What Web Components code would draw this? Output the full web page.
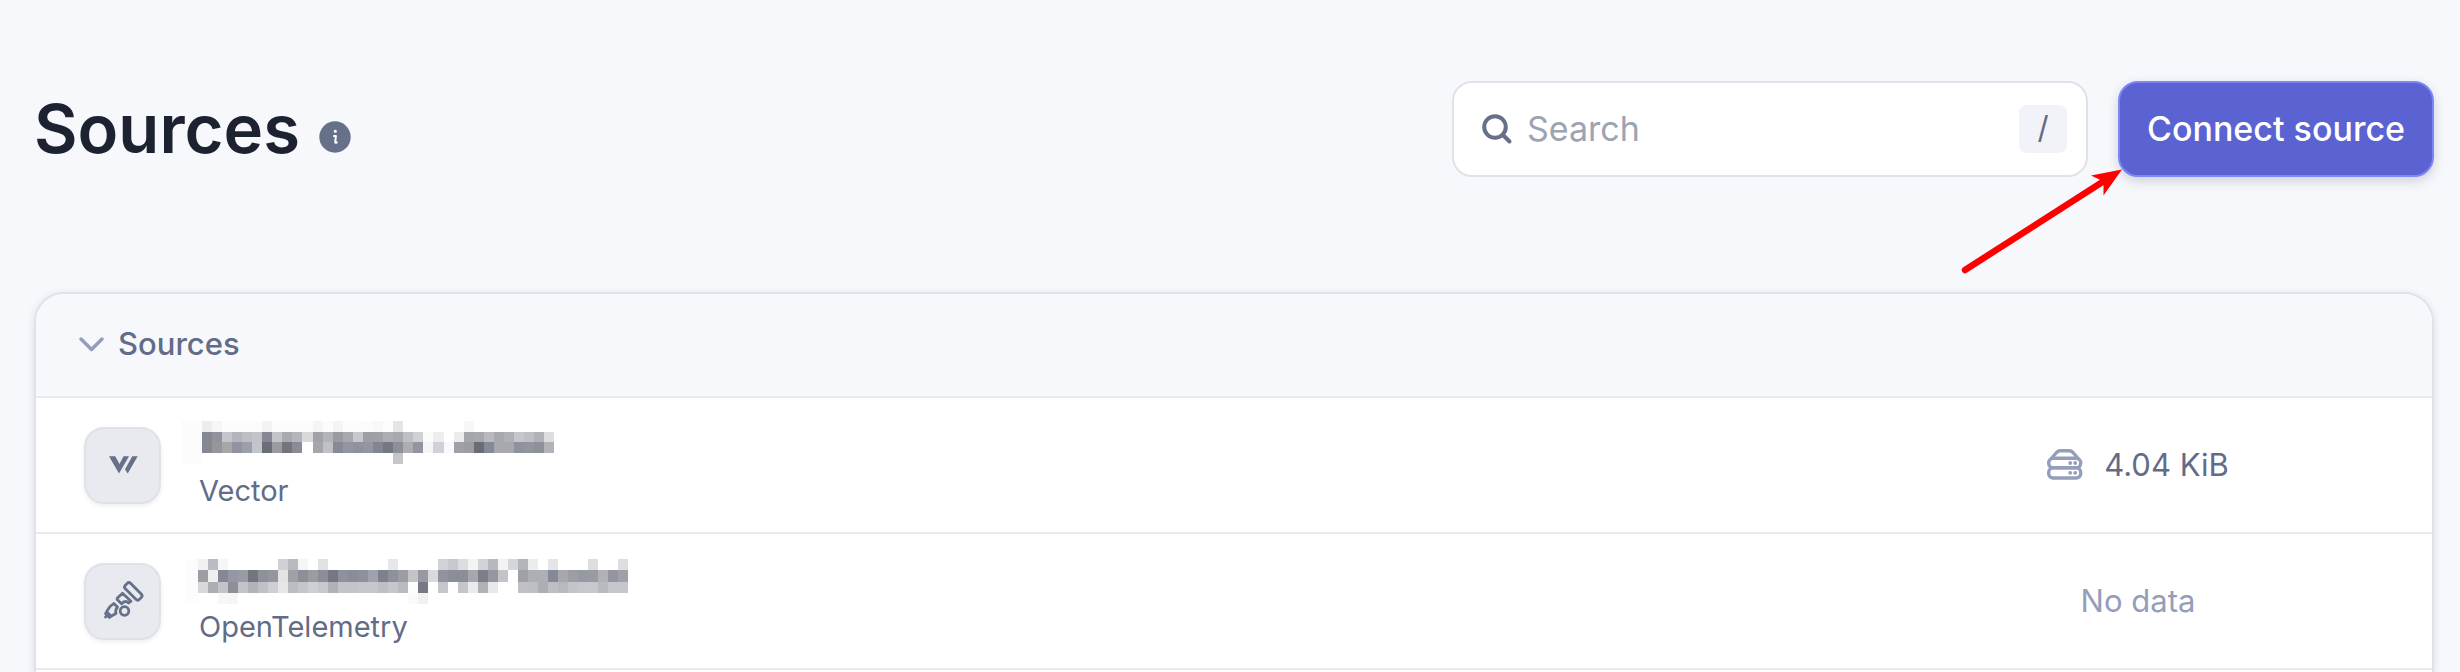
<!DOCTYPE html>
<html lang="en">
<head>
<meta charset="utf-8">
<title>Sources</title>
<style>
body { margin: 0; background: #f7f8fc; color: #626c87; font-family: Inter, "Liberation Sans", sans-serif; }
</style>
</head>
<body>
<sources-page></sources-page>

<template id="t-page">
<style>
:host { display: flex; flex-direction: column; box-sizing: border-box; min-height: 100vh; padding: 81px 26px 0 34px; }
header { display: flex; align-items: center; gap: 30px; height: 96px; margin-bottom: 115px; }
page-title, source-panel { flex: 1; }
.action { position: relative; display: flex; }
.arrow { position: absolute; left: -158px; top: 86px; pointer-events: none; }
</style>
<header>
  <page-title>Sources</page-title>
  <search-field></search-field>
  <div class="action">
    <primary-button>Connect source</primary-button>
    <svg class="arrow" width="166" height="110" viewBox="0 0 166 110" aria-hidden="true">
      <path d="M5 103 144 14" stroke="#f00" stroke-width="6.5" stroke-linecap="round"/>
      <path d="M162 2.500 131 8.500 140.500 13 143.500 17.500V28.500Z" fill="#f00"/>
    </svg>
  </div>
</header>
<source-panel heading="Sources">
  <source-row kind="Vector" icon="vector" name-mask="a"><storage-size>4.04 KiB</storage-size></source-row>
  <source-row kind="OpenTelemetry" icon="otel" name-mask="b"><no-data>No data</no-data></source-row>
</source-panel>
</template>

<template id="t-title">
<style>
:host { display: flex; align-items: center; gap: 19px; }
h1 { margin: 0; font-size: 67px; line-height: 80px; font-weight: 600; color: #1c2230; }
svg { margin-top: 16px; }
</style>
<h1><slot></slot></h1>
<svg width="32" height="32" viewBox="0 0 32 32" role="img" aria-label="Information">
  <circle cx="16" cy="16" r="15.700" fill="#667089"/>
  <circle cx="16.300" cy="10.300" r="1.500" fill="#fff"/>
  <path d="M15 15h1.900l-.7 6.200c.2.700.8.7 1.500.200" fill="none" stroke="#fff" stroke-width="2" stroke-linecap="round" stroke-linejoin="round"/>
</svg>
</template>

<template id="t-search">
<style>
:host { display: flex; align-items: center; box-sizing: border-box; width: 636px; height: 96px; padding: 0 19px 0 27px; background: #fff; border: 2px solid #dfe3e9; border-radius: 20px; }
label { display: flex; flex: 1; align-items: center; gap: 14px; min-width: 0; }
input { flex: 1; min-width: 0; border: 0; padding: 0; outline: 0; background: none; font: 400 34px/44px Inter, "Liberation Sans", sans-serif; color: #626c87; }
input::placeholder { color: #9ca3b2; opacity: 1; }
kbd { box-sizing: border-box; width: 48px; height: 48px; border-radius: 8px; background: #f2f3f8; text-align: center; font: 400 31px/46px Inter, "Liberation Sans", sans-serif; color: #626c87; }
</style>
<label>
  <svg width="32" height="32" viewBox="0 0 32 32" fill="none" stroke="#667089" stroke-width="4" stroke-linecap="round" aria-hidden="true"><circle cx="14" cy="14" r="10.800"/><path d="m22 22 6.500 6.500"/></svg>
  <input type="text" placeholder="Search" aria-label="Search">
</label>
<kbd>/</kbd>
</template>

<template id="t-button">
<style>
:host { display: block; }
button { box-sizing: border-box; height: 96px; padding: 0 27px; border: 2px solid #7c86f5; border-radius: 20px; background: #5b63d2; color: #fff; font: 500 34px/44px Inter, "Liberation Sans", sans-serif; box-shadow: 0 4px 12px rgba(30, 35, 60, .18); white-space: nowrap; }
</style>
<button type="button"><slot></slot></button>
</template>

<template id="t-panel">
<style>
:host { display: block; border: 2px solid #dfe3e9; border-bottom: 0; border-radius: 30px 30px 0 0; background: #fff; box-shadow: 0 2px 8px rgba(30, 35, 60, .12); overflow: hidden; }
button { display: flex; align-items: center; gap: 13px; box-sizing: border-box; width: 100%; height: 104px; padding: 0 42px 2px; border: 0; border-bottom: 2px solid #e9eaf0; background: #f7f8fc; color: #626c87; font: 500 31px/40px Inter, "Liberation Sans", sans-serif; text-align: left; }
</style>
<button type="button" aria-expanded="true">
  <svg width="27" height="16" viewBox="0 0 27 16" fill="none" stroke="#949ebb" stroke-width="3.500" stroke-linecap="round" stroke-linejoin="round" aria-hidden="true"><path d="m3 3 10.500 10.500L24 3"/></svg>
  <span></span>
</button>
<slot></slot>
</template>

<template id="t-row">
<style>
:host { display: grid; grid-template-columns: 77px 1fr 360px; column-gap: 38px; align-items: center; box-sizing: border-box; height: 136px; padding: 0 114px 0 48px; border-bottom: 2px solid #e9eaf0; }
.tile { box-sizing: border-box; width: 77px; height: 77px; border: 2px solid #dfe3e9; border-radius: 20px; background: #e9eaef; box-shadow: 0 2px 4px rgba(30, 35, 60, .08); }
.tile svg { display: block; margin: -2px; }
.mask { display: block; overflow: visible; margin-bottom: 4px; }
.kind { font-size: 29px; line-height: 36px; }
.value { display: flex; justify-content: center; font-size: 31px; line-height: 40px; }
</style>
<div class="tile"></div>
<div><svg class="mask" width="440" height="48" viewBox="0 0 440 48" role="img" aria-label="Hidden name" shape-rendering="crispEdges"></svg><div class="kind"></div></div>
<div class="value"><slot></slot></div>
</template>

<template id="t-size">
<style>
:host { display: flex; align-items: center; gap: 21px; }
</style>
<svg width="36" height="32" viewBox="0 0 36 32" fill="none" stroke="#949ebb" stroke-width="3.400" stroke-linejoin="round" aria-hidden="true">
  <path d="M3.500 10.500 9.500 3.500Q11.200 1.700 13.500 1.700H22Q24.300 1.700 26 3.500L32 10.500"/>
  <rect x="1.700" y="9.300" width="32" height="9.500" rx="4.500"/>
  <rect x="1.700" y="18.800" width="32" height="10.200" rx="4.500"/>
  <g fill="#949ebb" stroke="none"><circle cx="23.200" cy="14" r="1.900"/><circle cx="28.200" cy="14" r="1.900"/><circle cx="23.200" cy="23.800" r="1.900"/><circle cx="28.200" cy="23.800" r="1.900"/></g>
</svg>
<span><slot></slot></span>
</template>

<template id="t-nodata">
<style>:host { display: block; color: #949ebb; }</style>
<slot></slot>
</template>

<script>
const icons = {
  vector: '<svg width="77" height="77" viewBox="0 0 77 77" fill="#667089" aria-hidden="true"><path d="M25 29.300h6.200L35.500 37l4-7.700h5.500L35 46.500ZM48.300 29.300h5.400L43.700 46.500 41 42.300Z"/></svg>',
  otel: '<svg width="77" height="77" viewBox="0 0 77 77" fill="none" stroke="#667089" stroke-width="2.800" stroke-linejoin="round" stroke-linecap="round" aria-hidden="true"><rect x="39.300" y="24.600" width="20" height="7.600" rx="2.600" transform="rotate(45 49.300 28.400)"/><path d="M38.500 30.200 47 38.200 44.700 40Q41 36.800 37.500 40.700L33.200 36.500V35.200ZM29.800 40.500 33.500 44Q31 47 32 50.500L27 53.200 22.500 48.700 26 43.500ZM21.500 50.500 25.500 54.500M24.800 50.800 21.500 54"/><circle cx="40.500" cy="48" r="4.300"/></svg>'
};

/* Mosaic colours, one string per band; "-" leaves a cell empty. */
const masks = {
  a: { x: 3, lead: 21, y: [0, 11, 21, 32, 43], wide: [10, 23], bands: [
    'ededee f5f6f6 fcfcfc fcfcfc fcfcfc fcfcfc f2f4f4 fcfcfc fcfcfc fcfcfc fcfcfc f5f5f5 fcfcfc f3f5f4 fcfcfc fcfcfc fbfbfb f8f8f8 fdfdfd e4e5e7 - - - - - - f7f7f7',
    '858892 8f939d c5c6cb b3b5ba bebfc4 c3c4c9 858892 c3c4ca a9aab0 b5b6bc d9d9db a2a3a9 b2b4b8 9a9ba1 a8a9af c8c9cc 9e9fa4 a0a1a6 adaeb3 a8a9ae bfc0c5 d0d1d5 fbfbfb eeeeef - ececed a5a6ab a7a8ad bababe a8a9ae b0b1b6 c6c7cb bfc0c5 b1b2b7 dddde0',
    '858891 94969c a6a6ab 9094a0 9c9faa c4c5ca 696e78 9a9ba0 72757f 898c97 - a5a6ab c0c1c6 868a97 94969f 8f929c 93959f 838692 747882 8c8f98 acadb3 9295a0 f5f5f7 d0d1d6 f9f9fb a0a1a6 9c9da2 686c76 858995 a8a9af a8a9af 8e929d 92959e 8c9099 b2b3b8',
    '- - - - - - - - - - - - - - - - - - - c5c6ca'] },
  b: { x: -1, lead: 11, y: [2, 13, 25, 36, 47], wide: [], bands: [
    'f1f1f1 bbbcc1 f5f6f6 - - - - - d0d1d5 b8b9bf f4f5f5 - e0e1e3 - - - - - - e7e7e9 - - - - d1d2d5 c6c8cd dcdde0 f3f3f3 d2d3d7 b7b8bd f2f2f2 d5d6dc b3b4ba ebecee - e5e5e7 - - - dedee0 - - dedee0',
    '9d9ea4 efefef 848794 9598a2 999ca5 73767f 8e9199 9396a1 e3e3e5 a0a1a7 8c8f9a 9b9ca2 8b8e98 757883 8e919c 8a8d96 8e919b 9fa2ad 7e818b 8e919a 9c9da3 c3c4c8 9699a4 d9dadd 9093a0 8b8e97 8a8e96 a6a7ad 7c7f8a 9496a0 c3c4c9 - a0a1a7 aeafb4 aeafb4 858896 a7a8ae 9d9ea4 9699a1 989ba6 b1b2b8 9396a1 a0a1a6',
    'd8d8da adaeb4 c3c4c9 8c8f97 c3c4c9 b2b3b8 c0c1c6 cfcfd3 e6e6e8 bcbdc2 c5c6cb cfd0d3 c7c8cd b1b2b7 c3c4c9 c3c4c9 c6c7cb c6c7cb bebfc4 c6c7cc babbc0 fdfdfd 777a84 - c6c7cb - c5c6ca ebebed b1b2b7 e9e9eb - - c0c1c6 bdbec3 adaeb3 bebfc4 b8b9be c3c4c9 c7c8cd c7c8cd b9babf c6c7cc c6c7cc',
    '- - f7f7f7 f5f5f5 - - - - - - - - - - - - - - - - - fafafa f1f1f1'] }
};

function drawMask({ x, lead, y, wide, bands }) {
  let out = `<rect x="${x - lead}" y="${y[0]}" width="${lead}" height="43" fill="#fcfcfc"/>`;
  bands.forEach((band, r) => {
    let left = x;
    band.split(' ').forEach((c, i) => {
      const w = wide.includes(i) ? 11 : 10;
      if (c !== '-') out += `<rect x="${left}" y="${y[r]}" width="${w}" height="${y[r + 1] - y[r]}" fill="#${c}"/>`;
      left += w;
    });
  });
  return out;
}

function define(name, id, setup) {
  customElements.define(name, class extends HTMLElement {
    constructor() {
      super();
      this.attachShadow({ mode: 'open' }).append(document.getElementById(id).content.cloneNode(true));
    }
    connectedCallback() { if (setup) setup(this, this.shadowRoot); }
  });
}

define('page-title', 't-title');
define('search-field', 't-search');
define('primary-button', 't-button');
define('storage-size', 't-size');
define('no-data', 't-nodata');
define('source-panel', 't-panel', (el, root) => {
  root.querySelector('span').textContent = el.getAttribute('heading');
});
define('source-row', 't-row', (el, root) => {
  root.querySelector('.tile').innerHTML = icons[el.getAttribute('icon')];
  root.querySelector('.mask').innerHTML = drawMask(masks[el.getAttribute('name-mask')]);
  root.querySelector('.kind').textContent = el.getAttribute('kind');
});
define('sources-page', 't-page');
</script>
</body>
</html>
